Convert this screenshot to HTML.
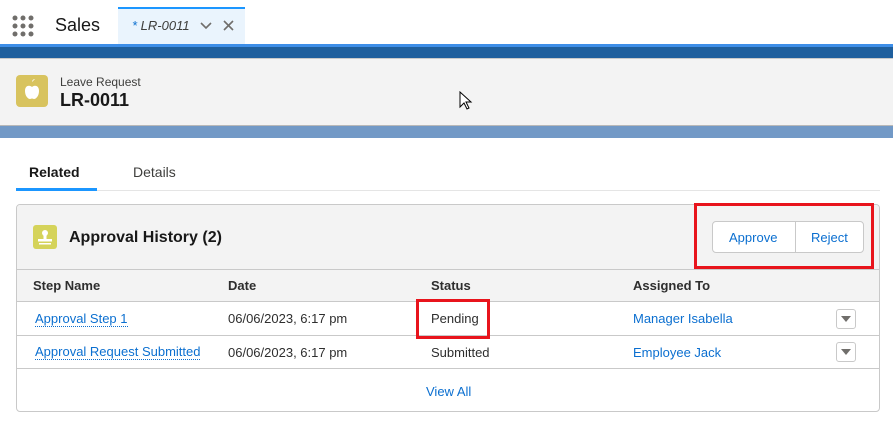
<!DOCTYPE html>
<html><head><style>
*{margin:0;padding:0;box-sizing:border-box}
body{width:893px;height:422px;overflow:hidden;background:#fff;font-family:"Liberation Sans",sans-serif;position:relative;color:#181818}
.a{position:absolute}
.link{color:#0b6fd0;font-size:13px}
.dot{border-bottom:1px dotted #0b6fd0}
th,td{}
</style></head><body>
<!-- top bar -->
<div class="a" style="left:12px;top:15px;width:22px;height:22px">
<svg width="22" height="22"><g fill="#706e6b"><circle cx="3" cy="3" r="2.5"/><circle cx="11" cy="3" r="2.5"/><circle cx="19" cy="3" r="2.5"/><circle cx="3" cy="11" r="2.5"/><circle cx="11" cy="11" r="2.5"/><circle cx="19" cy="11" r="2.5"/><circle cx="3" cy="19" r="2.5"/><circle cx="11" cy="19" r="2.5"/><circle cx="19" cy="19" r="2.5"/></g></svg></div>
<div class="a" style="left:55px;top:15px;font-size:18px;color:#181818">Sales</div>
<div class="a" style="left:118px;top:7px;width:127px;height:37px;background:#eaf4fd;border-top:2px solid #1b96ff"></div>
<div class="a" style="left:132px;top:18px;font-size:13px;font-style:italic;color:#3e3e3c"><span style="color:#0b6fd0">*</span> LR-0011</div>
<svg class="a" style="left:199px;top:20px" width="14" height="12"><path d="M2 3l5 5 5-5" stroke="#706e6b" stroke-width="1.6" fill="none"/></svg>
<svg class="a" style="left:222px;top:19px" width="13" height="13"><path d="M2 2l9 9M11 2l-9 9" stroke="#706e6b" stroke-width="1.6"/></svg>
<div class="a" style="left:0;top:44px;width:893px;height:3px;background:#3d8ee8"></div>
<div class="a" style="left:0;top:47px;width:893px;height:12px;background:#1f5f9d"></div>
<div class="a" style="left:0;top:58px;width:893px;height:68px;background:#f3f3f3;border-top:1px solid #c9c9c9;border-bottom:1px solid #b8b8b8"></div>
<div class="a" style="left:0;top:126px;width:893px;height:12px;background:#7299c6"></div>
<div class="a" style="left:16px;top:75px;width:32px;height:32px;background:#d8c35e;border-radius:4px"></div>
<svg class="a" style="left:22px;top:78px" width="20" height="26"><path d="M10 4c0-2 2-3 3-3-1 1-2 2-3 3z" fill="#fff"/><path d="M10 9c-2-2-7-2-7 4 0 5 3 8 5 8 1 0 1-.5 2-.5s1 .5 2 .5c2 0 5-3 5-8 0-6-5-6-7-4z" fill="#fff"/></svg>
<div class="a" style="left:60px;top:75px;font-size:12px;color:#3e3e3c">Leave Request</div>
<div class="a" style="left:60px;top:90px;font-size:18px;font-weight:bold">LR-0011</div>
<svg class="a" style="left:459px;top:91px" width="14" height="20"><path d="M1 1v15l4-4 3 6 2-1-3-6h5z" fill="#fff" stroke="#000" stroke-width="1"/></svg>
<!-- tabs -->
<div class="a" style="left:16px;top:190px;width:864px;height:1px;background:#e5e5e5"></div>
<div class="a" style="left:29px;top:164px;font-size:14px;font-weight:bold">Related</div>
<div class="a" style="left:16px;top:188px;width:81px;height:3px;background:#1b96ff"></div>
<div class="a" style="left:133px;top:164px;font-size:14px;color:#3e3e3c">Details</div>
<!-- card -->
<div class="a" style="left:16px;top:204px;width:864px;height:208px;border:1px solid #c9c9c9;border-radius:4px;background:#fff;overflow:hidden">
 <div class="a" style="left:0;top:0;width:862px;height:97px;background:#f3f3f3"></div>
 <div class="a" style="left:0;top:64px;width:862px;height:1px;background:#c9c9c9"></div>
 <div class="a" style="left:0;top:96px;width:862px;height:1px;background:#c9c9c9"></div>
 <div class="a" style="left:0;top:130px;width:862px;height:1px;background:#c9c9c9"></div>
 <div class="a" style="left:0;top:163px;width:862px;height:1px;background:#c9c9c9"></div>
</div>
<div class="a" style="left:33px;top:225px;width:24px;height:24px;background:#d5d35a;border-radius:3px"></div>
<svg class="a" style="left:33px;top:225px" width="24" height="24"><circle cx="12" cy="8" r="3" fill="#fff"/><rect x="10.5" y="10" width="3" height="4" fill="#fff"/><rect x="5" y="14" width="14" height="2.5" fill="#fff"/><rect x="6" y="18" width="12" height="1.5" fill="#fff"/></svg>
<div class="a" style="left:69px;top:229px;font-size:16px;font-weight:bold">Approval History (2)</div>
<div class="a" style="left:712px;top:221px;width:152px;height:32px;border:1px solid #c9c9c9;border-radius:4px;background:#fff"></div>
<div class="a" style="left:795px;top:222px;width:1px;height:30px;background:#c9c9c9"></div>
<div class="a link" style="left:729px;top:230px">Approve</div>
<div class="a link" style="left:811px;top:230px">Reject</div>
<div class="a" style="left:694px;top:203px;width:180px;height:66px;border:3px solid #e8141c"></div>
<!-- table -->
<div class="a" style="left:33px;top:278px;font-size:13px;font-weight:bold;color:#2e2e2e">Step Name</div>
<div class="a" style="left:228px;top:278px;font-size:13px;font-weight:bold;color:#2e2e2e">Date</div>
<div class="a" style="left:431px;top:278px;font-size:13px;font-weight:bold;color:#2e2e2e">Status</div>
<div class="a" style="left:633px;top:278px;font-size:13px;font-weight:bold;color:#2e2e2e">Assigned To</div>
<div class="a link dot" style="left:35px;top:311px">Approval Step 1</div>
<div class="a" style="left:228px;top:311px;font-size:13px;color:#2e2e2e">06/06/2023, 6:17 pm</div>
<div class="a" style="left:431px;top:311px;font-size:13px;color:#2e2e2e">Pending</div>
<div class="a link" style="left:633px;top:311px">Manager Isabella</div>
<div class="a link dot" style="left:35px;top:344px">Approval Request Submitted</div>
<div class="a" style="left:228px;top:345px;font-size:13px;color:#2e2e2e">06/06/2023, 6:17 pm</div>
<div class="a" style="left:431px;top:345px;font-size:13px;color:#2e2e2e">Submitted</div>
<div class="a link" style="left:633px;top:345px">Employee Jack</div>
<div class="a" style="left:416px;top:299px;width:74px;height:40px;border:3px solid #e8141c"></div>
<div class="a" style="left:836px;top:309px;width:20px;height:20px;border:1px solid #c9c9c9;border-radius:3px;background:#fff"></div>
<svg class="a" style="left:840px;top:316px" width="12" height="7"><path d="M1 0h10l-5 6z" fill="#706e6b"/></svg>
<div class="a" style="left:836px;top:342px;width:20px;height:20px;border:1px solid #c9c9c9;border-radius:3px;background:#fff"></div>
<svg class="a" style="left:840px;top:349px" width="12" height="7"><path d="M1 0h10l-5 6z" fill="#706e6b"/></svg>
<div class="a link" style="left:426px;top:384px">View All</div>
</body></html>
